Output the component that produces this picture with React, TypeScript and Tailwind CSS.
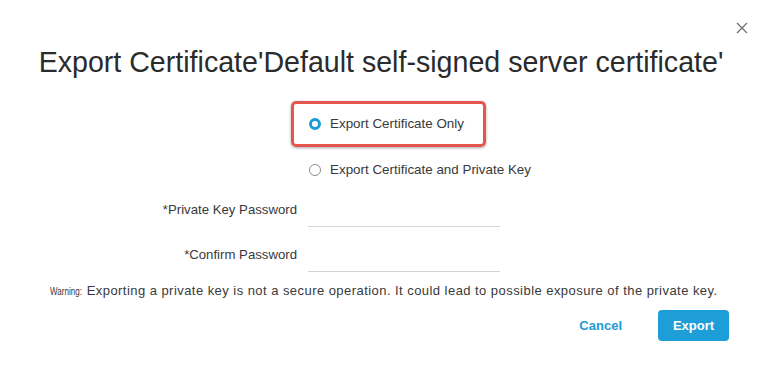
import React from "react";

export default function App() {
  return (
    <div className="relative w-[768px] h-[381px] bg-white font-['Liberation_Sans',Arial,sans-serif] text-[#39393b]">
      <button className="absolute left-[736px] top-[22px] w-[12px] h-[12px] text-[#6f6f6f]" aria-label="close">
        <svg viewBox="0 0 12 12" width="12" height="12" fill="none" stroke="currentColor" strokeWidth="1.3">
          <path d="M1 1 L11 11 M11 1 L1 11" />
        </svg>
      </button>
      <div className="flex flex-col pt-[46px]">
        <h1 className="text-center pr-[6px] text-[28.6px] leading-[32px] text-[#2b2b2b] font-normal whitespace-nowrap">
          Export Certificate'Default self-signed server certificate'
        </h1>
        <div className="ml-[291px] mt-[23px] w-[195px] h-[46px] rounded-[5px] border-[3px] border-[#e5564e] shadow-[0_1px_3px_rgba(0,0,0,0.35)] flex items-center pl-[15px] gap-[9px]">
          <span className="w-[12px] h-[12px] rounded-full border-[3.5px] border-[#1d9ad6] bg-white"></span>
          <span className="text-[13.4px] text-[#39393b]">Export Certificate Only</span>
        </div>
        <div className="ml-[309px] mt-[13px] h-[20px] flex items-center gap-[9px]">
          <span className="w-[12px] h-[12px] rounded-full border border-[#8c8c8c] bg-white"></span>
          <span className="text-[13.4px] text-[#39393b]">Export Certificate and Private Key</span>
        </div>
        <div className="mt-[13px] flex items-center h-[34px]">
          <label className="w-[297px] text-right text-[13.2px] text-[#39393b]">*Private Key Password</label>
          <div className="ml-[11px] w-[192px] h-[34px] border-b border-[#d4d4d4]"></div>
        </div>
        <div className="mt-[11px] flex items-center h-[34px]">
          <label className="w-[297px] text-right text-[13.2px] text-[#39393b]">*Confirm Password</label>
          <div className="ml-[11px] w-[192px] h-[34px] border-b border-[#d4d4d4]"></div>
        </div>
        <p className="mt-[11px] ml-[50px] h-[16px] leading-[16px] text-[13px] tracking-[0.45px] text-[#39393b] whitespace-nowrap">
          <span className="inline-block text-[11.5px] tracking-[0px] origin-left scale-x-[0.7] mr-[-13px]">Warning:</span> Exporting a private key is not a secure operation. It could lead to possible exposure of the private key.
        </p>
        <div className="mt-[11px] flex justify-end items-center pr-[39px]">
          <button className="text-[13px] font-bold text-[#1d9ad6] mr-[36px]">Cancel</button>
          <button className="w-[71px] h-[31px] rounded-[4px] bg-[#1d9ed8] text-white text-[13px] font-bold">Export</button>
        </div>
      </div>
    </div>
  );
}
